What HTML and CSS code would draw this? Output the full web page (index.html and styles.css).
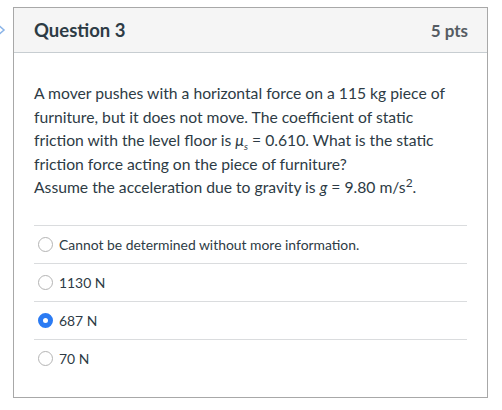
FILE: index.html
```html
<!DOCTYPE html>
<html>
<head>
<meta charset="utf-8">
<link rel="stylesheet" href="styles.css">
</head>
<body>
<div class="page">
  <svg class="nav-chevron" width="8" height="14" viewBox="0 0 8 14"><path d="M-3 1 L4 7 L-3 13" fill="none" stroke="#8ab4e8" stroke-width="1.5"/></svg>
  <div class="card">
    <div class="card-header">
      <span class="q-title">Question 3</span>
      <span class="q-pts">5 pts</span>
    </div>
    <div class="card-body">
      <div class="q-text">
        <p>A mover pushes with a horizontal force on a 115 kg piece of furniture, but it does not move. The coefficient of static friction with the level floor is <i class="math">μ<sub>s</sub></i> = 0.610. What is the static friction force acting on the piece of furniture?<br>Assume the acceleration due to gravity is <i class="math">g</i> = 9.80 m/s<sup>2</sup>.</p>
      </div>
      <div class="answers">
        <label class="answer"><span class="radio"></span><span class="a-text">Cannot be determined without more information.</span></label>
        <label class="answer"><span class="radio"></span><span class="a-text">1130 N</span></label>
        <label class="answer"><span class="radio checked"></span><span class="a-text">687 N</span></label>
        <label class="answer"><span class="radio"></span><span class="a-text">70 N</span></label>
      </div>
    </div>
  </div>
</div>
</body>
</html>
```
FILE: styles.css
```css
html, body {
  margin: 0;
  padding: 0;
  background: #fff;
}
body {
  font-family: Lato, "Open Sans", sans-serif;
  color: #2d3b45;
}
.page {
  position: relative;
  padding: 7px 0 0 13px;
}
.nav-chevron {
  position: absolute;
  left: 0;
  top: 23px;
}
.card {
  width: 475px;
  box-sizing: border-box;
  border: 1px solid #a8a8a8;
}
.card-header {
  display: flex;
  justify-content: space-between;
  align-items: center;
  height: 44px;
  padding: 0 19px 0 20px;
  background: #f5f5f5;
  border-bottom: 1px solid #c7cdd1;
}
.q-title {
  font-size: 18.5px;
  font-weight: 700;
  color: #2d3b45;
}
.q-pts {
  font-size: 17px;
  font-weight: 700;
  color: #555c63;
}
.card-body {
  padding: 29px 20px 20px 20px;
}
.q-text {
  max-width: 420px;
}
.q-text p {
  margin: 0;
  font-size: 15.7px;
  line-height: 23.5px;
  color: #2d3b45;
}
.math {
  font-style: italic;
}
.q-text sub {
  font-size: 10px;
  line-height: 0;
}
.q-text sup {
  font-size: 12px;
  line-height: 0;
}
.answers {
  margin-top: 25px;
}
.answer {
  display: flex;
  align-items: center;
  height: 38px;
  border-top: 1px solid #dadcde;
  padding-left: 4px;
  box-sizing: border-box;
}
.radio {
  width: 15px;
  height: 15px;
  box-sizing: border-box;
  border: 1px solid #b4b4b4;
  border-radius: 50%;
  background: #fff;
  margin-right: 6px;
  flex: none;
}
.radio.checked {
  border: 5.5px solid #2b7bf3;
  background: #fff;
}
.a-text {
  font-size: 13.9px;
  color: #2d3b45;
}
```
